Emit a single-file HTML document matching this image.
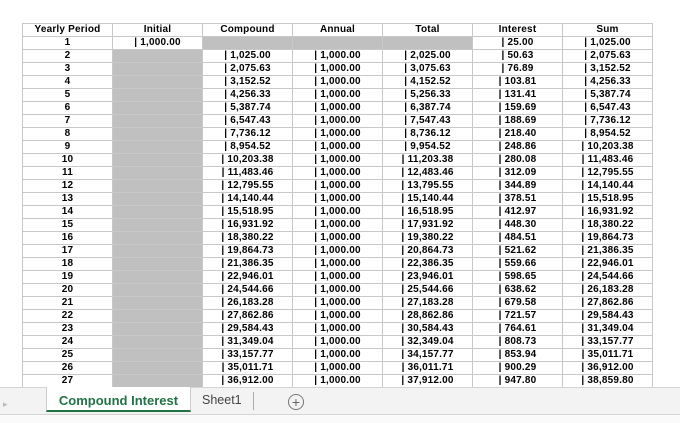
<!DOCTYPE html><html><head><style>
body{margin:0;width:680px;height:421px;background:#fff;position:relative;overflow:hidden;font-family:"Liberation Sans",Arial,sans-serif}
table{position:absolute;left:22px;top:23px;border-collapse:collapse;table-layout:fixed}
td{width:89px;height:12px;border:1px solid #c8c8c8;padding:0;font-size:10px;font-weight:bold;text-align:center;line-height:12px;white-space:nowrap;overflow:hidden;color:#000;letter-spacing:0.2px}
.g{background:#c0c0c0}
#bar{position:absolute;left:0;top:387px;width:680px;height:34px;background:#f3f3f3;border-top:1px solid #d4d4d4}
</style></head><body>
<table id="t"></table>
<div id="bar">
<div style="position:absolute;left:3px;top:11px;color:#bbb;font-size:9px">▸</div>
<div style="position:absolute;left:46px;top:-1px;width:143px;height:23px;background:#fff;border-bottom:2px solid #217346;border-left:1px solid #ccc;border-right:1px solid #ccc;color:#217346;font-weight:bold;font-size:13px;text-align:center;line-height:27px">Compound Interest</div>
<div style="position:absolute;left:202px;top:5px;font-size:12.5px;color:#444">Sheet1</div>
<div style="position:absolute;left:253px;top:4px;width:1px;height:18px;background:#aaa"></div>
<div style="position:absolute;left:288px;top:6px;width:14px;height:14px;border:1px solid #777;border-radius:50%;text-align:center;line-height:14px;font-size:14px;color:#666">+</div>
<div style="position:absolute;left:0;top:26px;width:680px;height:8px;background:#fafafa;border-top:1px solid #d4d4d4"></div>
</div>
<script>
var t=document.getElementById('t'),h='<tr><td>Yearly Period</td><td>Initial</td><td>Compound</td><td>Annual</td><td>Total</td><td>Interest</td><td>Sum</td></tr>';
function f(n){return '| '+n.toLocaleString('en-US',{minimumFractionDigits:2,maximumFractionDigits:2});}
var x=1000;
for(var i=1;i<=27;i++){var tt=(i==1?1000:x+1000);var it=Math.round(tt*0.025*100)/100;var sm=tt+it;
if(i==1){h+='<tr><td>1</td><td>'+f(1000)+'</td><td class="g"></td><td class="g"></td><td class="g"></td><td>'+f(it)+'</td><td>'+f(sm)+'</td></tr>';}
else h+='<tr><td>'+i+'</td><td class="g"></td><td>'+f(x)+'</td><td>'+f(1000)+'</td><td>'+f(tt)+'</td><td>'+f(it)+'</td><td>'+f(sm)+'</td></tr>';
x=sm;}
t.innerHTML=h;
</script>
</body></html>
